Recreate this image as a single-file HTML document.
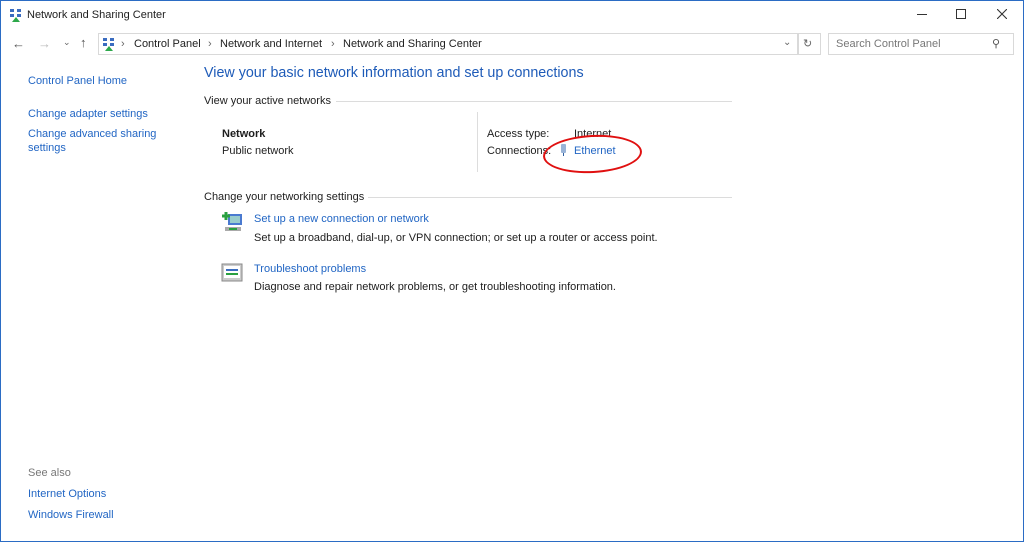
<!DOCTYPE html><html><head><style>
body{margin:0;width:1024px;height:542px;overflow:hidden;background:#fff;font-family:"Liberation Sans",sans-serif;font-size:11px;color:#1e1e1e;position:relative}
.a{position:absolute;white-space:nowrap}
.l{color:#2266c4}
.hr{position:absolute;height:1px;background:#dcdcdc}
</style></head><body>
<div class="a" style="left:0;top:0;width:1022px;height:540px;border:1px solid #2b6cc4"></div>
<svg class="a" style="left:9px;top:8px" width="14" height="14"><rect x="1" y="1" width="4" height="3" fill="#3a6cc0"/><rect x="8" y="1" width="4" height="3" fill="#3a6cc0"/><rect x="1" y="6" width="4" height="3" fill="#3a6cc0"/><rect x="8" y="6" width="4" height="3" fill="#3a6cc0"/><path d="M3 14 L7 9 L11 14Z" fill="#2ca84a"/></svg>
<div class="a" style="left:27px;top:9px;font-size:11px">Network and Sharing Center</div>
<div class="a" style="left:917px;top:14px;width:10px;height:1px;background:#333"></div>
<div class="a" style="left:956px;top:9px;width:8px;height:8px;border:1px solid #333"></div>
<svg class="a" style="left:997px;top:9px" width="10" height="10"><path d="M0 0L10 10M10 0L0 10" stroke="#333" stroke-width="1.1"/></svg>
<div class="a" style="left:12px;top:36px;font-size:13px;color:#555">←</div>
<div class="a" style="left:38px;top:36px;font-size:13px;color:#bbb">→</div>
<div class="a" style="left:63px;top:37px;font-size:9px;color:#666">⌄</div>
<div class="a" style="left:80px;top:35px;font-size:13px;color:#555">↑</div>
<div class="a" style="left:98px;top:33px;width:699px;height:20px;border:1px solid #d9d9d9"></div>
<svg class="a" style="left:102px;top:37px" width="14" height="14"><rect x="1" y="1" width="4" height="3" fill="#3a6cc0"/><rect x="8" y="1" width="4" height="3" fill="#3a6cc0"/><rect x="1" y="6" width="4" height="3" fill="#3a6cc0"/><rect x="8" y="6" width="4" height="3" fill="#3a6cc0"/><path d="M3 14 L7 9 L11 14Z" fill="#2ca84a"/></svg>
<div class="a" style="left:121px;top:38px;color:#666">›</div>
<div class="a" style="left:134px;top:38px">Control Panel</div>
<div class="a" style="left:208px;top:38px;color:#666">›</div>
<div class="a" style="left:220px;top:38px">Network and Internet</div>
<div class="a" style="left:331px;top:38px;color:#666">›</div>
<div class="a" style="left:343px;top:38px">Network and Sharing Center</div>
<div class="a" style="left:783px;top:37px;color:#666;font-size:10px">⌄</div>
<div class="a" style="left:797px;top:33px;width:22px;height:20px;border:1px solid #d9d9d9"></div>
<div class="a" style="left:803px;top:37px;color:#666">↻</div>
<div class="a" style="left:828px;top:33px;width:184px;height:20px;border:1px solid #d9d9d9"></div>
<div class="a" style="left:836px;top:38px;color:#777">Search Control Panel</div>
<div class="a" style="left:992px;top:37px;color:#555">⚲</div>
<div class="a l" style="left:28px;top:75px">Control Panel Home</div>
<div class="a l" style="left:28px;top:108px">Change adapter settings</div>
<div class="a l" style="left:28px;top:128px">Change advanced sharing</div>
<div class="a l" style="left:28px;top:142px">settings</div>
<div class="a" style="left:28px;top:467px;color:#777">See also</div>
<div class="a l" style="left:28px;top:488px">Internet Options</div>
<div class="a l" style="left:28px;top:509px">Windows Firewall</div>
<div class="a" style="left:204px;top:65px;font-size:14.3px;color:#1e5bb8">View your basic network information and set up connections</div>
<div class="a" style="left:204px;top:95px">View your active networks</div>
<div class="hr" style="left:336px;top:101px;width:396px"></div>
<div class="a" style="left:222px;top:128px;font-weight:bold">Network</div>
<div class="a" style="left:222px;top:145px">Public network</div>
<div class="a" style="left:477px;top:112px;width:1px;height:60px;background:#ddd"></div>
<div class="a" style="left:487px;top:128px">Access type:</div>
<div class="a" style="left:574px;top:128px">Internet</div>
<div class="a" style="left:487px;top:145px">Connections:</div>
<svg class="a" style="left:559px;top:143px" width="10" height="14"><rect x="2" y="1" width="5" height="9" rx="1" fill="#9ab4d8"/><rect x="4" y="10" width="1" height="3" fill="#3060a0"/></svg>
<div class="a l" style="left:574px;top:145px">Ethernet</div>
<div class="a" style="left:543px;top:135px;width:95px;height:34px;border:2px solid #e01010;border-radius:50%;transform:rotate(-3deg)"></div>
<div class="a" style="left:204px;top:191px">Change your networking settings</div>
<div class="hr" style="left:368px;top:197px;width:364px"></div>
<svg class="a" style="left:221px;top:210px" width="24" height="24"><rect x="7" y="4" width="14" height="11" fill="#4a7ad0"/><rect x="9" y="6" width="10" height="7" fill="#9cc"/><path d="M1 6h8M5 2v8" stroke="#2aa040" stroke-width="3"/><rect x="4" y="17" width="16" height="4" fill="#aaa"/><path d="M8 19h8" stroke="#2aa040" stroke-width="2"/></svg>
<div class="a l" style="left:254px;top:213px">Set up a new connection or network</div>
<div class="a" style="left:254px;top:232px">Set up a broadband, dial-up, or VPN connection; or set up a router or access point.</div>
<svg class="a" style="left:221px;top:263px" width="22" height="20"><rect x="1" y="1" width="20" height="17" fill="#ccc" stroke="#888"/><rect x="3" y="3" width="16" height="12" fill="#fff"/><path d="M5 7h12" stroke="#3a6cc0" stroke-width="2"/><path d="M5 11h12" stroke="#2aa040" stroke-width="2"/></svg>
<div class="a l" style="left:254px;top:263px">Troubleshoot problems</div>
<div class="a" style="left:254px;top:281px">Diagnose and repair network problems, or get troubleshooting information.</div>
</body></html>
